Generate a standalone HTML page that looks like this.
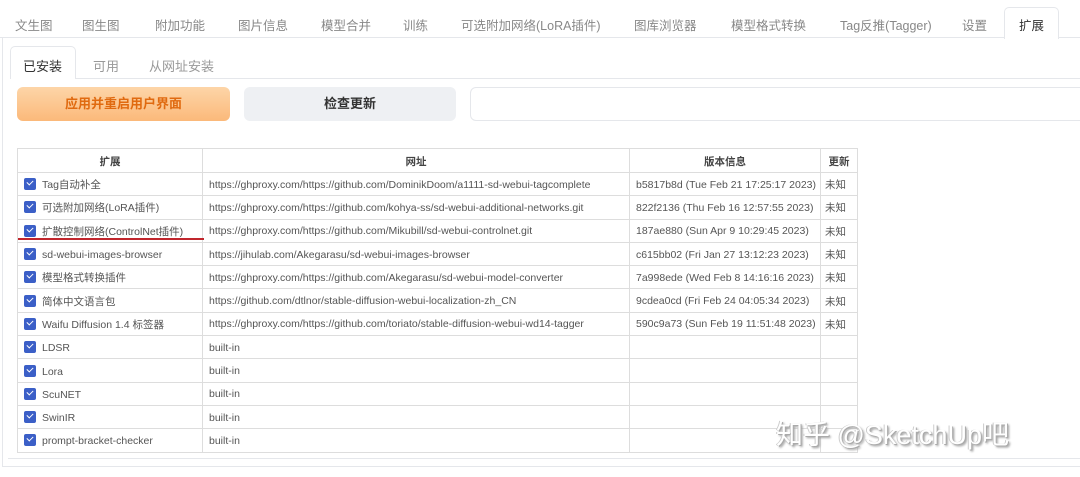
<!DOCTYPE html>
<html><head><meta charset="utf-8"><style>
*{margin:0;padding:0;box-sizing:border-box}
body{width:1080px;height:477px;background:#fff;font-family:"Liberation Sans","Noto Sans CJK SC",sans-serif;color:#333;position:relative;overflow:hidden}
.tabs{position:absolute;top:0;left:0;width:1080px;height:38px;border-bottom:1px solid #e5e7eb}
.tabs span{position:absolute;top:15px;font-size:12.5px;color:#888}
.act{position:absolute;left:1004px;top:7px;width:55px;height:32px;border:1px solid #e5e7eb;border-bottom:none;background:#fff;border-radius:5px 5px 0 0}
.panel{position:absolute;left:2px;top:38px;width:1090px;height:429px;border:1px solid #e5e7eb;border-top:none}
.sub{position:absolute;left:10px;top:46px;width:66px;height:33px;border:1px solid #e5e7eb;border-bottom:none;background:#fff;border-radius:5px 5px 0 0}
.subline{position:absolute;left:10px;top:78px;width:1080px;border-top:1px solid #e5e7eb}
.st{position:absolute;top:56px;font-size:13px;color:#999}
.btn{position:absolute;top:87px;height:34px;border-radius:6px;font-size:13px;font-weight:bold;text-align:center;line-height:34px}
table{position:absolute;left:17px;top:148px;border-collapse:collapse;font-size:10.5px;color:#555;table-layout:fixed;width:840px}
td,th{border:1px solid #ddd;height:23.3px;padding:1px 6px 0;white-space:nowrap;overflow:hidden;vertical-align:middle}
th{font-weight:bold;color:#444;text-align:center;height:24px}
td:last-child{padding:1px 4px 0}
.cb{display:inline-block;width:12px;height:12px;background:#3b5fc7;border-radius:2px;vertical-align:-2px;margin-right:6px;position:relative}
.cb:after{content:"";position:absolute;left:3px;top:2px;width:5px;height:3px;border-left:1.5px solid #fff;border-bottom:1.5px solid #fff;transform:rotate(-45deg)}
.wm{position:absolute;left:776px;top:413px;font-size:27px;color:#fff;text-shadow:1px 1px 0 #aaa,-1px 0 0 #ccc,2px 2px 2px #999}
</style></head><body>
<div class="tabs">
<span style="left:15px">文生图</span><span style="left:82px">图生图</span><span style="left:155px">附加功能</span><span style="left:238px">图片信息</span><span style="left:321px">模型合并</span><span style="left:403px">训练</span><span style="left:461px">可选附加网络(LoRA插件)</span><span style="left:634px">图库浏览器</span><span style="left:731px">模型格式转换</span><span style="left:840px">Tag反推(Tagger)</span><span style="left:962px">设置</span>
<div class="act"></div><span style="left:1019px;color:#333">扩展</span>
</div>
<div class="panel"></div>
<div class="subline"></div>
<div class="sub"></div>
<span class="st" style="left:23px;color:#333">已安装</span><span class="st" style="left:93px">可用</span><span class="st" style="left:149px">从网址安装</span>
<div class="btn" style="left:17px;width:213px;background:linear-gradient(#fdd5a8,#fbb97a);color:#e06a10">应用并重启用户界面</div>
<div class="btn" style="left:244px;width:212px;background:#eef0f3;color:#333">检查更新</div>
<div class="btn" style="left:470px;width:620px;border:1px solid #e5e7eb;background:#fff"></div>
<table>
<colgroup><col style="width:185px"><col style="width:427px"><col style="width:191px"><col style="width:37px"></colgroup>
<tr><th>扩展</th><th>网址</th><th>版本信息</th><th>更新</th></tr>
<tr><td><i class="cb"></i>Tag自动补全</td><td>https://ghproxy.com/https://github.com/DominikDoom/a1111-sd-webui-tagcomplete</td><td>b5817b8d (Tue Feb 21 17:25:17 2023)</td><td>未知</td></tr>
<tr><td><i class="cb"></i>可选附加网络(LoRA插件)</td><td>https://ghproxy.com/https://github.com/kohya-ss/sd-webui-additional-networks.git</td><td>822f2136 (Thu Feb 16 12:57:55 2023)</td><td>未知</td></tr>
<tr><td><i class="cb"></i>扩散控制网络(ControlNet插件)</td><td>https://ghproxy.com/https://github.com/Mikubill/sd-webui-controlnet.git</td><td>187ae880 (Sun Apr 9 10:29:45 2023)</td><td>未知</td></tr>
<tr><td><i class="cb"></i>sd-webui-images-browser</td><td>https://jihulab.com/Akegarasu/sd-webui-images-browser</td><td>c615bb02 (Fri Jan 27 13:12:23 2023)</td><td>未知</td></tr>
<tr><td><i class="cb"></i>模型格式转换插件</td><td>https://ghproxy.com/https://github.com/Akegarasu/sd-webui-model-converter</td><td>7a998ede (Wed Feb 8 14:16:16 2023)</td><td>未知</td></tr>
<tr><td><i class="cb"></i>简体中文语言包</td><td>https://github.com/dtlnor/stable-diffusion-webui-localization-zh_CN</td><td>9cdea0cd (Fri Feb 24 04:05:34 2023)</td><td>未知</td></tr>
<tr><td><i class="cb"></i>Waifu Diffusion 1.4 标签器</td><td>https://ghproxy.com/https://github.com/toriato/stable-diffusion-webui-wd14-tagger</td><td>590c9a73 (Sun Feb 19 11:51:48 2023)</td><td>未知</td></tr>
<tr><td><i class="cb"></i>LDSR</td><td>built-in</td><td></td><td></td></tr>
<tr><td><i class="cb"></i>Lora</td><td>built-in</td><td></td><td></td></tr>
<tr><td><i class="cb"></i>ScuNET</td><td>built-in</td><td></td><td></td></tr>
<tr><td><i class="cb"></i>SwinIR</td><td>built-in</td><td></td><td></td></tr>
<tr><td><i class="cb"></i>prompt-bracket-checker</td><td>built-in</td><td></td><td></td></tr>
</table>
<div style="position:absolute;left:18px;top:238px;width:186px;height:2px;background:#c0262d"></div>
<div style="position:absolute;left:8px;top:458px;width:1080px;border-top:1px solid #e5e7eb"></div>
<div class="wm">知乎 @SketchUp吧</div>
</body></html>
